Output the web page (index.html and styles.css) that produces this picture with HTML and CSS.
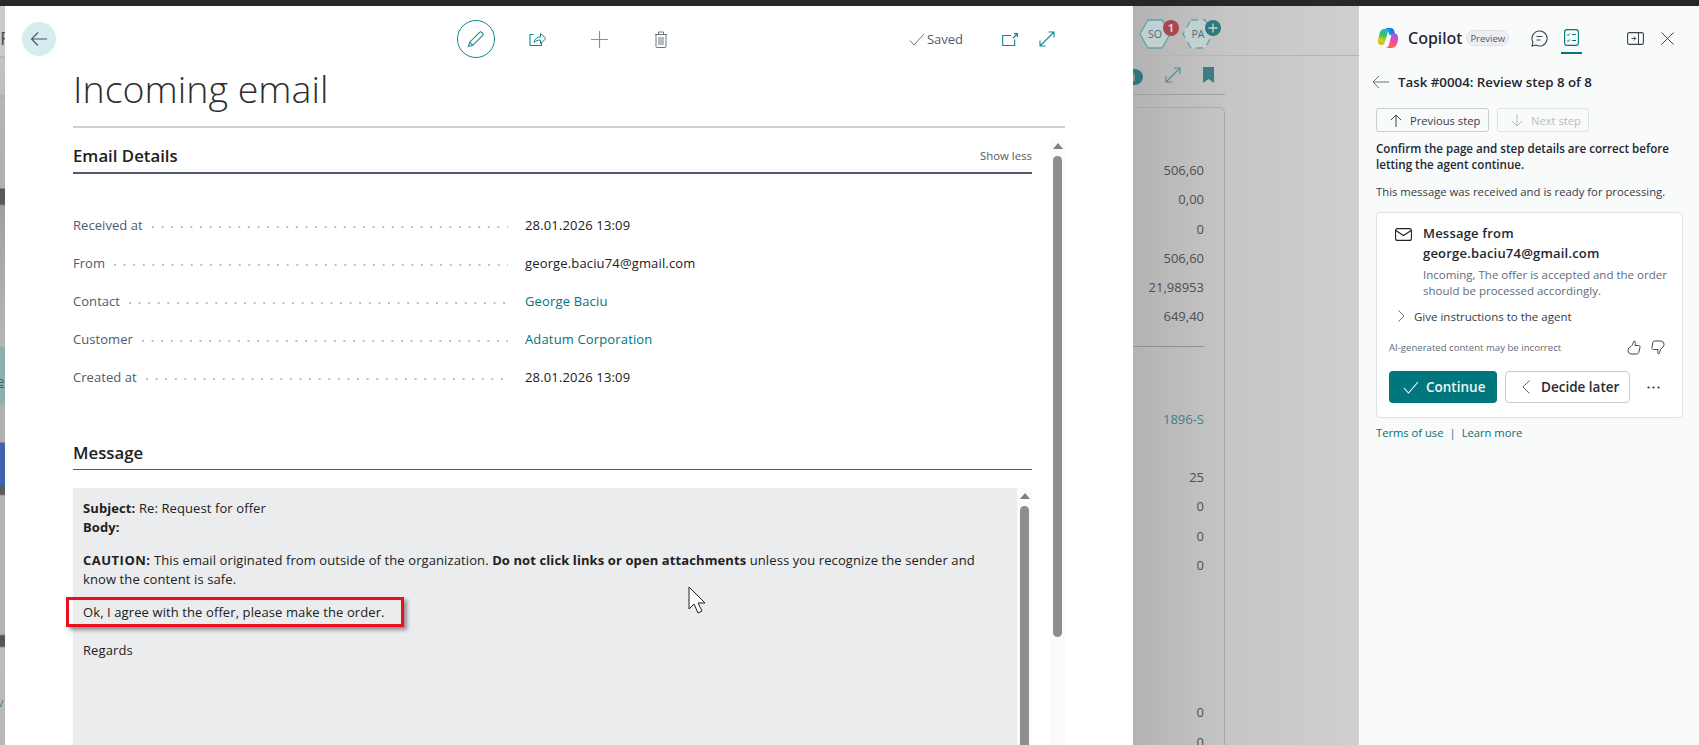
FILE: index.html
```html
<!DOCTYPE html>
<html lang="en">
<head>
<meta charset="utf-8">
<title>Incoming email</title>
<link rel="stylesheet" href="styles.css">
</head>
<body>
<div class="topbar"></div>
<div class="main">
  <div class="workspace">
    <div class="left-strip"><span class="strip-f">F</span><span class="strip-e">e</span><span class="strip-v">v</span></div>
    <div class="bgpage">
      <div class="bg-head">
        <svg class="bg-hex" width="44" height="34" viewBox="0 0 44 34"><path d="M9 2h14l8 14-8 14H9L1 16z" fill="#c3d0d2" stroke="#5fa4aa" stroke-width="1.3"/><text x="16" y="20" class="hex-text">SO</text><circle cx="32" cy="10" r="8" fill="#a8484e"/><text x="32" y="14" class="badge-text">1</text></svg>
        <svg class="bg-hex" width="44" height="34" viewBox="0 0 44 34"><path d="M9 2h14l8 14-8 14H9L1 16z" fill="#c3d0d2" stroke="#5fa4aa" stroke-width="1.3" stroke-dasharray="7 5"/><text x="16" y="20" class="hex-text">PA</text><circle cx="31" cy="10" r="8" fill="#2c7a80"/><path d="M31 5.500v9M26.500 10h9" stroke="#c6d6d6" stroke-width="1.300"/></svg>
      </div>
      <div class="bg-column">
        <div class="bg-actions">
          <span class="bg-info">i</span>
          <svg class="bg-expand" width="16" height="16" viewBox="0 0 16 16"><path d="M1 15L15 1M9 1h6v6M1 9v6h6" fill="none" stroke="#4e8b90" stroke-width="1.100"/></svg>
          <svg width="11" height="16" viewBox="0 0 11 16"><path d="M0 0h11v16l-5.500-4L0 16z" fill="#3f7d84"/></svg>
        </div>
        <div class="bg-card">
          <div class="bg-row">506,60</div>
          <div class="bg-row">0,00</div>
          <div class="bg-row">0</div>
          <div class="bg-row">506,60</div>
          <div class="bg-row">21,98953</div>
          <div class="bg-row">649,40</div>
          <div class="bg-rule"></div>
          <div class="bg-row bg-link">1896-S</div>
          <div class="bg-row bg-after-link">25</div>
          <div class="bg-row">0</div>
          <div class="bg-row">0</div>
          <div class="bg-row">0</div>
          <div class="bg-row bg-after-gap">0</div>
          <div class="bg-row">0</div>
        </div>
      </div>
    </div>

    <section class="dialog">
      <div class="toolbar">
        <button class="back-btn" aria-label="Back"><svg width="18" height="16" viewBox="0 0 18 16"><path d="M17 8H1.500M8 1.500L1.500 8 8 14.500" fill="none" stroke="#4a5563" stroke-width="1.100"/></svg></button>
        <span class="edit-btn"><svg width="18" height="18" viewBox="0 0 18 18"><path d="M1.500 16.500l1.200-4.300L12.600 2.300a1.500 1.500 0 0 1 2.100 0l1 1a1.500 1.500 0 0 1 0 2.100l-9.900 9.900zM2.700 12.200l3.100 3.100" fill="none" stroke="#0e8a92" stroke-width="1.100"/></svg></span>
        <span class="tool tool-share"><svg width="18" height="16" viewBox="0 0 18 16"><path d="M4.500 3.500H1v11h11.500V11" fill="none" stroke="#0e8a92" stroke-width="1.100"/><path d="M5 11.500c.3-3.500 3-5.500 6.500-5.500V2.500l5.500 5-5.500 5V9c-2.500 0-5 .8-6.500 2.500z" fill="none" stroke="#0e8a92" stroke-width="1"/></svg></span>
        <span class="tool tool-plus"><svg width="17" height="17" viewBox="0 0 17 17"><path d="M8.500 0v17M0 8.500h17" stroke="#8b9198" stroke-width="1.200"/></svg></span>
        <span class="tool tool-trash"><svg width="14" height="17" viewBox="0 0 14 17"><path d="M1 3.500h12M2 3.500V15.500a1 1 0 0 0 1 1h8a1 1 0 0 0 1-1V3.500M4.500 3.500V1h5v2.500M5 6v8M7 6v8M9 6v8" fill="none" stroke="#6e747d" stroke-width="1"/></svg></span>
        <div class="tool-right">
          <svg class="saved-check" width="16" height="13" viewBox="0 0 16 13"><path d="M1 7.500L5 12 15 1" fill="none" stroke="#6e747d" stroke-width="1"/></svg>
          <span class="saved">Saved</span>
          <svg class="open-icon" width="16" height="13" viewBox="0 0 16 13"><path d="M9 2.500H.7v10h12V6.500M11 5l4-4M12 .6h3.400V4" fill="none" stroke="#0e8a92" stroke-width="1.100"/></svg>
          <svg class="expand-icon" width="16" height="16" viewBox="0 0 16 16"><path d="M1 15L15 1M9.500 1H15v5.500M1 9.500V15h5.500" fill="none" stroke="#0e8a92" stroke-width="1.100"/></svg>
        </div>
      </div>
      <h1 class="title">Incoming email</h1>
      <div class="content">
        <div class="form">
          <div class="section-head strong-rule">
            <h2>Email Details</h2>
            <span class="show-less">Show less</span>
          </div>
          <div class="fields">
            <div class="field"><span class="label">Received at</span><span class="leader"></span><span class="value">28.01.2026 13:09</span></div>
            <div class="field"><span class="label">From</span><span class="leader"></span><span class="value">george.baciu74@gmail.com</span></div>
            <div class="field"><span class="label">Contact</span><span class="leader"></span><span class="value link">George Baciu</span></div>
            <div class="field"><span class="label">Customer</span><span class="leader"></span><span class="value link">Adatum Corporation</span></div>
            <div class="field"><span class="label">Created at</span><span class="leader"></span><span class="value">28.01.2026 13:09</span></div>
          </div>
          <div class="section-head thin-rule">
            <h2>Message</h2>
          </div>
          <div class="message-box">
            <div class="message">
              <p><b>Subject:</b> Re: Request for offer<br><b>Body:</b></p>
              <p><b class="caution">CAUTION:</b> This email originated from outside of the organization. <b>Do not click links or open attachments</b> unless you recognize the sender and<br>know the content is safe.</p>
              <p class="agree">Ok, I agree with the offer, please make the order.<span class="highlight"></span></p>
              <p>Regards</p>
              <svg class="cursor" width="20" height="29" viewBox="0 0 20 29"><path d="M1 1v22l5-5 4 9 4-2-4-8h7z" fill="#fff" stroke="#222" stroke-width="1"/></svg>
            </div>
            <div class="track inner-track"><span class="arrow"></span><span class="thumb inner-thumb"></span></div>
          </div>
        </div>
        <div class="track outer-track"><span class="arrow"></span><span class="thumb outer-thumb"></span></div>
      </div>
    </section>
  </div>

  <aside class="copilot">
    <div class="cp-head">
      <svg class="cp-logo" width="22" height="22" viewBox="0 0 22 22">
        <defs>
          <linearGradient id="lgA" x1="1" y1="0" x2="0" y2="1"><stop offset="0" stop-color="#1a5fe0"/><stop offset="1" stop-color="#12b0dc"/></linearGradient>
          <linearGradient id="lgB" x1=".6" y1="0" x2=".3" y2="1"><stop offset="0" stop-color="#1cb4d8"/><stop offset=".4" stop-color="#3cc060"/><stop offset=".75" stop-color="#d8d020"/><stop offset="1" stop-color="#f8a020"/></linearGradient>
          <linearGradient id="lgC" x1=".7" y1="0" x2=".3" y2="1"><stop offset="0" stop-color="#a050f0"/><stop offset=".55" stop-color="#f0509a"/><stop offset="1" stop-color="#f07038"/></linearGradient>
        </defs>
        <path d="M9 1h4.500c2 0 3.200 1 3.800 3l1 4h-6l-1-3.500C10.800 3 10 2.500 9 2.500z" fill="url(#lgA)"/>
        <path d="M7.500 2C4 2 3 4.500 2.200 7.500L1.200 12c-.7 3.500.3 6 3.300 6 2 0 3-1 3.500-3l2.500-9c.4-1.800 1.300-3.500 3-4z" fill="url(#lgB)"/>
        <path d="M15 6.500h2.500C20 6.500 21 8.500 21 11c0 5-2 10-6.500 10H8c2.500 0 3.500-1.500 4.200-4L14 9.500c.3-1.500.5-3 1-3z" fill="url(#lgC)"/>
      </svg>
      <span class="cp-name">Copilot</span>
      <span class="cp-pill">Preview</span>
      <span class="cp-tab cp-tab-chat"><svg width="17" height="17" viewBox="0 0 17 17"><path d="M8.500 1a7.500 7.500 0 1 1-3.600 14L1 16l1-3.800A7.500 7.500 0 0 1 8.500 1zM5.500 6.500h6M5.500 10h4" fill="none" stroke="#3d4450" stroke-width="1.100"/></svg></span>
      <span class="cp-tab cp-tab-task"><svg width="15" height="17" viewBox="0 0 15 17"><rect x=".6" y=".6" width="13.800" height="15.800" rx="2.500" fill="none" stroke="#00767d" stroke-width="1.100"/><path d="M3 5.500l1 1 2-2M3 11.500l1 1 2-2M8 5.500h4M8 11.500h4" fill="none" stroke="#00767d"/></svg></span>
      <span class="cp-actions">
        <svg width="17" height="13" viewBox="0 0 17 13"><rect x=".6" y=".6" width="15.800" height="11.800" rx="1.500" fill="none" stroke="#3d4450" stroke-width="1.100"/><path d="M11.500 .6v11.800M4.500 6.500h4M6.800 4.500l2 2-2 2" fill="none" stroke="#3d4450"/></svg>
        <svg class="cp-close" width="13" height="13" viewBox="0 0 13 13"><path d="M.5.500l12 12M12.500.500l-12 12" stroke="#3d4450" stroke-width="1"/></svg>
      </span>
    </div>
    <div class="cp-task">
      <svg width="17" height="14" viewBox="0 0 17 14"><path d="M17 7H1M7 1L1 7l6 6" fill="none" stroke="#6b7280" stroke-width="1"/></svg>
      <span>Task #0004: Review step 8 of 8</span>
    </div>
    <div class="cp-body">
      <div class="steps">
        <span class="step step-prev"><svg width="12" height="13" viewBox="0 0 12 13"><path d="M6 13V1M1 6l5-5 5 5" fill="none" stroke="#3d4450" stroke-width="1"/></svg>Previous step</span>
        <span class="step step-off"><svg width="12" height="13" viewBox="0 0 12 13"><path d="M6 0v12M1 7l5 5 5-5" fill="none" stroke="#b7bcc4" stroke-width="1"/></svg>Next step</span>
      </div>
      <p class="confirm">Confirm the page and step details are correct before letting the agent continue.</p>
      <p class="received">This message was received and is ready for processing.</p>
      <div class="card">
        <div class="card-top">
          <svg class="mail" width="17" height="13" viewBox="0 0 17 13"><rect x=".6" y=".6" width="15.800" height="11.800" rx="2" fill="none" stroke="#222" stroke-width="1.100"/><path d="M.8 2.500l7.700 5 7.700-5" fill="none" stroke="#222" stroke-width="1.100"/></svg>
          <div class="card-text">
            <div class="card-title">Message from<br>george.baciu74@gmail.com</div>
            <div class="card-desc">Incoming, The offer is accepted and the order should be processed accordingly.</div>
          </div>
        </div>
        <div class="give"><svg width="7" height="12" viewBox="0 0 7 12"><path d="M.5.500L6 6 .5 11.500" fill="none" stroke="#6b7280"/></svg><span>Give instructions to the agent</span></div>
        <div class="ai-row">
          <span class="ai-note">AI-generated content may be incorrect</span>
          <svg class="thumb-up" width="14" height="15" viewBox="0 0 14 15"><path d="M7 1c1.500 0 1.500 2 1 4.500h3.500c1.200 0 1.800 1 1.500 2l-1.300 5c-.3 1-1 1.500-2 1.500H5c-2.500 0-4-1.300-4-3.500 0-2 1.500-3.200 3-4.200C5.500 5.300 6 3 7 1z" fill="none" stroke="#3d4450" stroke-width="1"/></svg>
          <svg width="14" height="15" viewBox="0 0 14 15"><path d="M8 14c-1.500 0-1.500-2-1-4.500H2.500c-1.200 0-1.800-1-1.500-2l.8-5c.3-1 1-1.500 2-1.500H9c2.500 0 4 1.300 4 3.500 0 2-1.500 3.200-3 4.200C9 9.700 9 12 8 14z" fill="none" stroke="#3d4450" stroke-width="1"/></svg>
        </div>
        <div class="buttons">
          <span class="btn btn-primary"><svg width="16" height="13" viewBox="0 0 16 13"><path d="M1 7l4.500 5L15 1" fill="none" stroke="#fff" stroke-width="1.100"/></svg>Continue</span>
          <span class="btn btn-plain"><svg width="8" height="14" viewBox="0 0 8 14"><path d="M7.500.500L1 7l6.500 6.500" fill="none" stroke="#5d6470" stroke-width="1"/></svg>Decide later</span>
          <svg class="more" width="13" height="3" viewBox="0 0 13 3"><circle cx="1.500" cy="1.500" r="1.100" fill="#333"/><circle cx="6.500" cy="1.500" r="1.100" fill="#333"/><circle cx="11.500" cy="1.500" r="1.100" fill="#333"/></svg>
        </div>
      </div>
      <div class="cp-links"><span>Terms of use</span><span class="sep">|</span><span>Learn more</span></div>
    </div>
  </aside>
</div>
</body>
</html>
```
FILE: styles.css
```css
* { box-sizing: border-box; }
html, body { margin: 0; height: 745px; overflow: hidden; }
body { font-family: "Open Sans", "Noto Sans", sans-serif; font-size: 13px; color: #212121; background: #fff; }
svg { display: block; flex: none; }

.topbar { height: 6px; background: #272727; }
.main { display: flex; height: 739px; }

/* dimmed page behind the dialog */
.workspace { position: relative; flex: 1; overflow: hidden; display: flex; background: linear-gradient(90deg, #b3b3b3 1133px, #c6c6c6 1230px, #cfcfcf 1359px); }
.left-strip { width: 5px; flex: none; position: relative; overflow: hidden;
  background: linear-gradient(180deg, #cacaca 0, #cacaca 50px, #a8a8a8 51px, #c4c4c4 52px, #bdbdbd 89px, #a5a5a5 90px, #b5b5b5 91px, #b0b0b0 182px, #565656 183px, #5a5a5a 198px, #a0a0a0 200px, #b6b6b6 340px, #8eafae 341px, #8eafae 398px, #b0b0b0 399px, #b0b0b0 436px, #3f63ad 437px, #3f63ad 479px, #5a5a5a 480px, #5a5a5a 488px, #b5b5b5 490px, #b5b5b5 628px, #555 630px, #555 640px, #bdbdbd 642px, #b8b8b8 100%); }
.strip-f { position: absolute; left: 0; top: 20px; font-size: 19px; line-height: 24px; color: #4a4a4a; }
.strip-e { position: absolute; left: -3px; top: 366px; font-size: 13px; line-height: 18px; color: #2f6f74; text-decoration: underline; }
.strip-v { position: absolute; left: -3px; top: 687px; font-size: 13px; line-height: 18px; color: #3f8a8f; }
.bgpage { flex: 1; padding-left: 1128px; display: flex; flex-direction: column; color: #4f4f4f; }
.bg-head { height: 50px; flex: none; border-bottom: 1px solid #b5b5b5; display: flex; padding: 12px 0 0 6px; }
.bg-hex { margin-right: -1px; }
.hex-text { font-size: 10.500px; fill: #4d6f72; text-anchor: middle; font-family: "Open Sans", sans-serif; }
.badge-text { font-size: 11px; font-weight: 700; fill: #d8c8c8; text-anchor: middle; font-family: "Open Sans", sans-serif; }
.bg-column { width: 92px; flex: none; }
.bg-actions { height: 39px; border-bottom: 1px solid #9f9f9f; display: flex; align-items: center; position: relative; padding-left: 32px; }
.bg-info { position: absolute; left: -8px; top: 13px; width: 18px; height: 16px; border-radius: 50%; background: #2f747a; color: #b9d0d2; font-size: 11px; line-height: 16px; text-align: center; }
.bg-expand { margin-right: 22px; }
.bg-card { margin-top: 12px; height: 660px; border: 1px solid #a9a9a9; border-left: 0; border-radius: 0 6px 0 0; padding: 48px 20px 0 0; text-align: right; font-size: 13px; }
.bg-row { height: 29.300px; line-height: 29.300px; white-space: nowrap; }
.bg-rule { margin: 14px 0 0 -80px; border-top: 1px solid #8f8f8f; height: 59px; }
.bg-link { color: #3f808a; }
.bg-after-link { margin-top: 29px; }
.bg-after-gap { margin-top: 118px; }

/* dialog */
.dialog { position: absolute; left: 5px; top: 0; bottom: 0; width: 1128px; background: #fff; display: flex; flex-direction: column; }
.toolbar { height: 66px; flex: none; display: flex; align-items: center; padding: 0 78px 0 17px; }
.back-btn { width: 34px; height: 34px; padding: 0; border: 0; border-radius: 50%; background: #d3edf0; display: flex; align-items: center; justify-content: center; }
.edit-btn { width: 38px; height: 38px; margin-left: 401px; border: 1px solid #0e8a92; border-radius: 50%; display: flex; align-items: center; justify-content: center; }
.tool { display: block; }
.tool-share { margin-left: 34px; }
.tool-plus { margin-left: 44px; }
.tool-trash { margin-left: 46px; }
.tool-right { margin-left: auto; display: flex; align-items: center; }
.saved { margin-left: 2px; color: #505a6c; font-size: 13px; }
.open-icon { margin-left: 39px; }
.expand-icon { margin-left: 21px; }
.title { margin: 0 68px; height: 56px; flex: none; border-bottom: 2px solid #cdd2d5; font-size: 37.600px; line-height: 34px; font-weight: 300; color: #2e2e2e; }
.content { flex: 1; min-height: 0; display: flex; margin-left: 68px; margin-right: 68px; justify-content: space-between; }
.form { width: 959px; display: flex; flex-direction: column; }
.section-head { display: flex; align-items: center; justify-content: space-between; flex: none; }
.section-head h2 { margin: 0; font-size: 16.800px; font-weight: 600; color: #212121; }
.strong-rule { height: 46px; padding-top: 10px; border-bottom: 2px solid #505a6c; }
.thin-rule { height: 34px; margin-top: 40px; border-bottom: 1px solid #505a6c; }
.show-less { color: #505a6c; font-size: 11.400px; }
.fields { padding-top: 32px; }
.field { height: 38px; display: grid; grid-template-columns: auto 1fr 187px; align-items: center; width: 639px; }
.label { color: #505a6c; padding-right: 9px; white-space: nowrap; letter-spacing: .05px; }
.leader { height: 2px; margin-top: 3px; background: radial-gradient(circle at 1px 1px, #b9bdc4 .8px, transparent 1px) 0 0 / 9.600px 2px repeat-x; margin-right: 17px; }
.value { white-space: nowrap; letter-spacing: .15px; }
.link { color: #00757e; }
.message-box { margin-top: 18px; flex: 1; min-height: 0; display: flex; }
.message { position: relative; flex: 1; background: #ebecee; padding: 11px 0 0 10px; line-height: 19px; letter-spacing: .1px; }
.message p { margin: 0 0 14px; }
.message p.agree { position: relative; margin-bottom: 19px; }
.highlight { position: absolute; left: -17px; top: -6px; width: 338px; height: 30px; border: 3px solid #e9101b; box-shadow: 3px 3px 4px rgba(0, 0, 0, .4); }
.message b { font-weight: 700; }
.message b.caution { letter-spacing: .5px; }
.cursor { position: absolute; left: 615px; top: 98px; }
.track { width: 15px; flex: none; position: relative; background: #fbfbfb; overflow: hidden; }
.arrow { display: block; width: 0; margin: 5px auto 0; border: 5px solid transparent; border-top: 0; border-bottom: 6px solid #7f7f7f; }
.thumb { display: block; width: 9px; margin: 4px auto 0; border-radius: 5px; background: #8d8d8d; }
.outer-track { margin-top: 10px; }
.outer-thumb { height: 481px; margin-top: 7px; }
.inner-thumb { height: 300px; margin-top: 7px; }

/* copilot */
.copilot { width: 340px; flex: none; background: #f9fafa; display: flex; flex-direction: column; }
.cp-head { height: 48px; display: flex; align-items: center; padding: 16px 0 0 18px; flex: none; }
.cp-name { margin-left: 9px; font-size: 16px; font-weight: 500; color: #1f2430; font-family: "Noto Sans", sans-serif; }
.cp-pill { margin-left: 4px; height: 16px; padding: 0 3px; display: flex; align-items: center; border: 1px solid #dfe1e5; border-radius: 8px; background: #eceef1; font-size: 9.500px; color: #505a6c; }
.cp-tab { height: 32px; display: flex; align-items: center; justify-content: center; }
.cp-tab-chat { margin-left: 21px; width: 18px; }
.cp-tab-task { margin-left: 13px; width: 21px; border-bottom: 2px solid #00767d; }
.cp-actions { margin-left: 45px; display: flex; align-items: center; gap: 17px; }
.cp-task { display: flex; align-items: center; height: 54px; padding: 2px 0 0 13px; flex: none; font-size: 13.300px; font-weight: 600; color: #212733; }
.cp-task span { margin-left: 9px; }
.cp-body { padding: 0 16px 0 17px; }
.steps { display: flex; gap: 8px; }
.step { height: 24px; display: flex; align-items: center; gap: 8px; padding: 0 8px 0 13px; border: 1px solid #c8ccd2; border-radius: 3px; font-size: 11.200px; color: #343b47; white-space: nowrap; }
.step-prev { width: 113px; }
.step-off { width: 92px; color: #b7bcc4; border-color: #e0e3e6; }
.confirm { margin: 9px 0 0; font-size: 11.600px; line-height: 16px; font-weight: 600; color: #212733; }
.received { margin: 11px 0 0; font-size: 11.300px; line-height: 16px; color: #343b47; }
.card { margin-top: 12px; height: 206px; background: #fff; border: 1px solid #dfe2e6; border-radius: 4px; padding: 10px 0 0 12px; }
.card-top { display: flex; }
.mail { margin: 5px 0 0 6px; }
.card-text { margin-left: 11px; width: 250px; }
.card-title { font-size: 13px; line-height: 20px; font-weight: 600; color: #212733; letter-spacing: .2px; }
.card-desc { margin-top: 4px; font-size: 11.500px; line-height: 16px; color: #626b7a; }
.give { display: flex; align-items: center; margin: 8px 0 0 9px; height: 18px; font-size: 11.500px; color: #343b47; }
.give span { margin-left: 9px; }
.ai-row { display: flex; align-items: center; margin-top: 12px; height: 20px; font-size: 9.600px; color: #626b7a; padding-right: 17px; }
.ai-note { flex: 1; }
.thumb-up { margin-right: 10px; }
.buttons { display: flex; align-items: center; margin-top: 14px; }
.btn { height: 32px; display: flex; align-items: center; border-radius: 4px; font-size: 13.500px; font-weight: 600; }
.btn-primary { width: 108px; background: #00767d; color: #f0f7f7; padding-left: 14px; gap: 7px; }
.btn-plain { width: 125px; margin-left: 8px; background: #fff; border: 1px solid #c8ccd2; color: #262c38; padding-left: 16px; gap: 11px; }
.more { margin-left: 17px; }
.cp-links { margin-top: 7px; font-size: 11.200px; color: #0a6e75; display: flex; }
.sep { margin: 0 6px; color: #0b6fb0; }
```
